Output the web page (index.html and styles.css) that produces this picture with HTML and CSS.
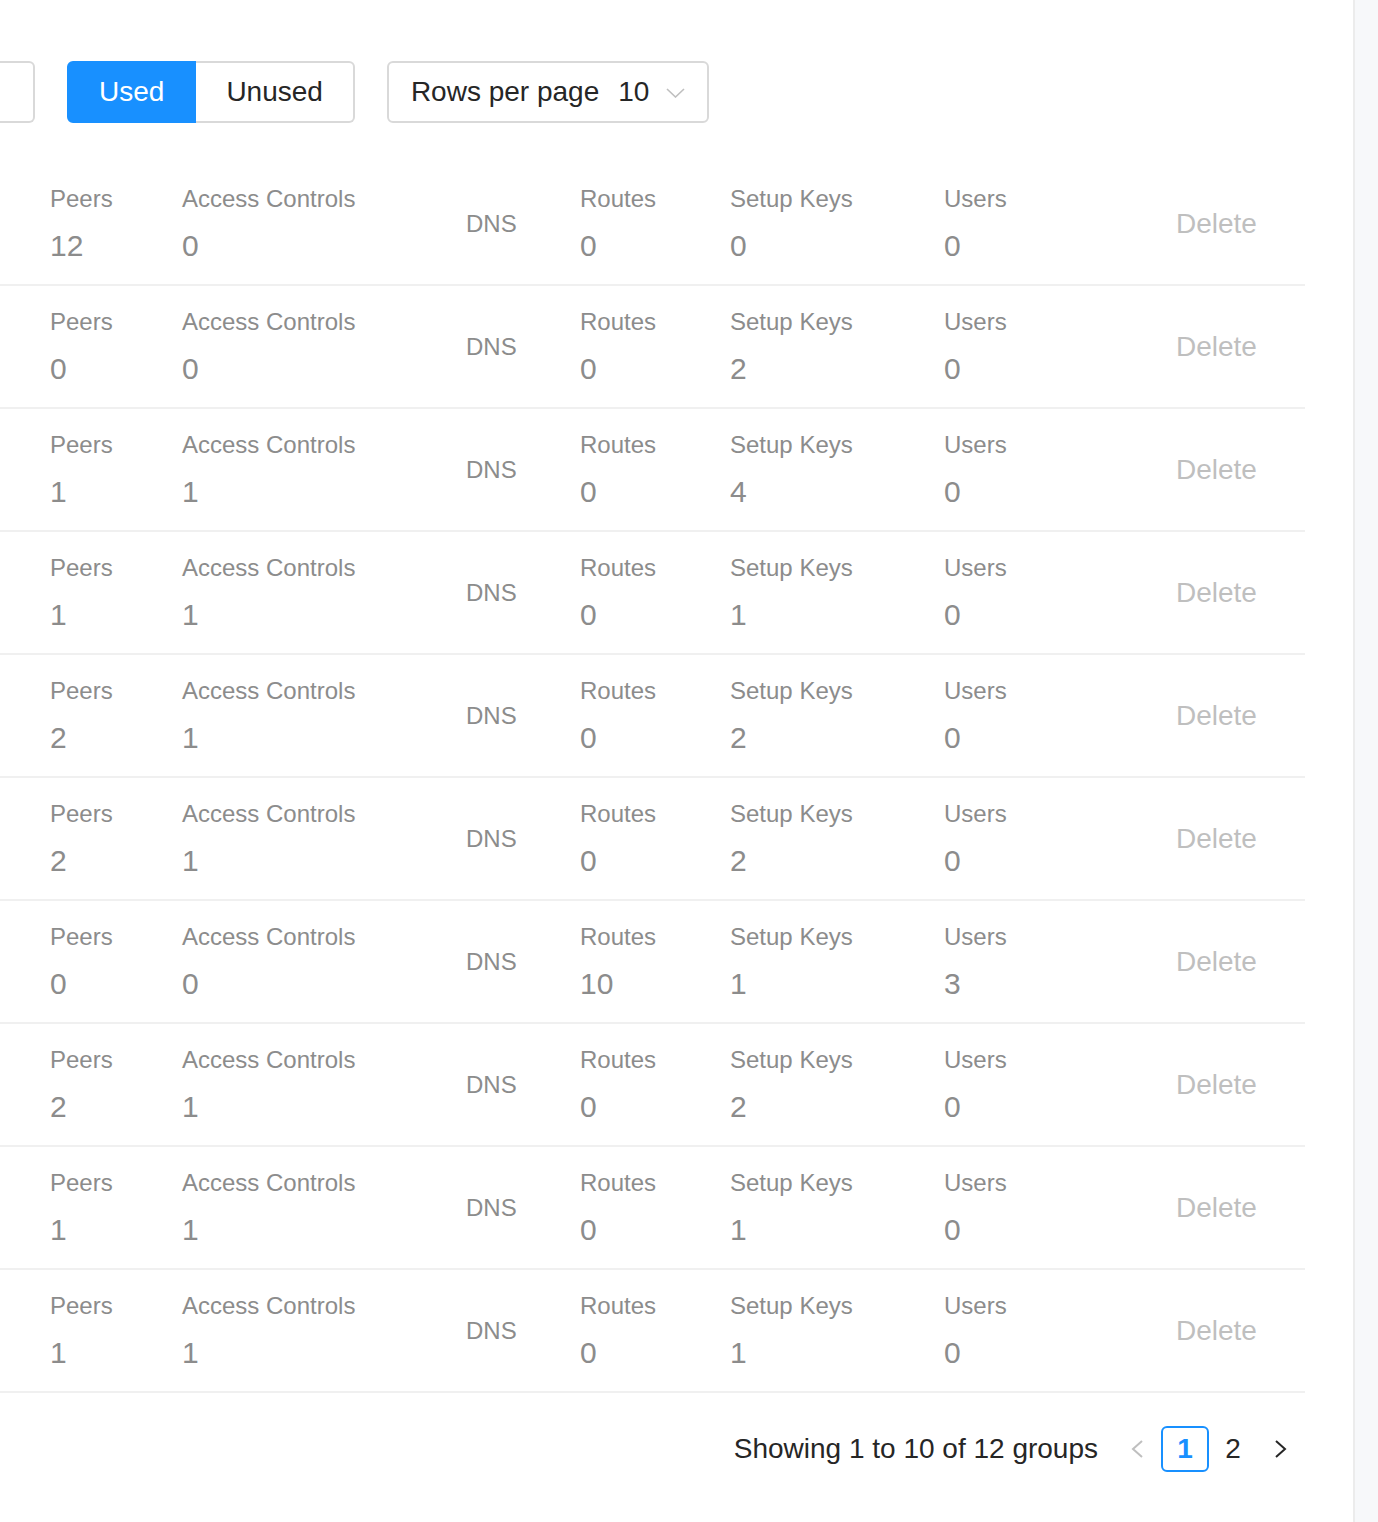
FILE: index.html
```html
<!DOCTYPE html>
<html lang="en">
<head>
<meta charset="utf-8">
<title>Groups</title>
<link rel="stylesheet" href="styles.css">
</head>
<body>
<div class="layout">
  <main class="main">
    <div class="toolbar">
      <div class="search-stub"></div>
      <div class="segmented">
        <span class="seg seg-active">Used</span>
        <span class="seg">Unused</span>
      </div>
      <div class="select">
        <span class="select-prefix">Rows per page</span>
        <span class="select-value">10</span>
        <svg class="select-arrow" width="19" height="10" viewBox="0 0 19 10"><path d="M1 1 L9.5 9 L18 1" fill="none" stroke="#bfbfbf" stroke-width="1.6"/></svg>
      </div>
    </div>

    <div class="table">
      <div class="row">
        <div class="cell"><div class="label">Peers</div><div class="value">12</div></div>
        <div class="cell"><div class="label">Access Controls</div><div class="value">0</div></div>
        <div class="cell center"><div class="label">DNS</div></div>
        <div class="cell"><div class="label">Routes</div><div class="value">0</div></div>
        <div class="cell"><div class="label">Setup Keys</div><div class="value">0</div></div>
        <div class="cell"><div class="label">Users</div><div class="value">0</div></div>
        <div class="cell center"><span class="delete">Delete</span></div>
      </div>
      <div class="row">
        <div class="cell"><div class="label">Peers</div><div class="value">0</div></div>
        <div class="cell"><div class="label">Access Controls</div><div class="value">0</div></div>
        <div class="cell center"><div class="label">DNS</div></div>
        <div class="cell"><div class="label">Routes</div><div class="value">0</div></div>
        <div class="cell"><div class="label">Setup Keys</div><div class="value">2</div></div>
        <div class="cell"><div class="label">Users</div><div class="value">0</div></div>
        <div class="cell center"><span class="delete">Delete</span></div>
      </div>
      <div class="row">
        <div class="cell"><div class="label">Peers</div><div class="value">1</div></div>
        <div class="cell"><div class="label">Access Controls</div><div class="value">1</div></div>
        <div class="cell center"><div class="label">DNS</div></div>
        <div class="cell"><div class="label">Routes</div><div class="value">0</div></div>
        <div class="cell"><div class="label">Setup Keys</div><div class="value">4</div></div>
        <div class="cell"><div class="label">Users</div><div class="value">0</div></div>
        <div class="cell center"><span class="delete">Delete</span></div>
      </div>
      <div class="row">
        <div class="cell"><div class="label">Peers</div><div class="value">1</div></div>
        <div class="cell"><div class="label">Access Controls</div><div class="value">1</div></div>
        <div class="cell center"><div class="label">DNS</div></div>
        <div class="cell"><div class="label">Routes</div><div class="value">0</div></div>
        <div class="cell"><div class="label">Setup Keys</div><div class="value">1</div></div>
        <div class="cell"><div class="label">Users</div><div class="value">0</div></div>
        <div class="cell center"><span class="delete">Delete</span></div>
      </div>
      <div class="row">
        <div class="cell"><div class="label">Peers</div><div class="value">2</div></div>
        <div class="cell"><div class="label">Access Controls</div><div class="value">1</div></div>
        <div class="cell center"><div class="label">DNS</div></div>
        <div class="cell"><div class="label">Routes</div><div class="value">0</div></div>
        <div class="cell"><div class="label">Setup Keys</div><div class="value">2</div></div>
        <div class="cell"><div class="label">Users</div><div class="value">0</div></div>
        <div class="cell center"><span class="delete">Delete</span></div>
      </div>
      <div class="row">
        <div class="cell"><div class="label">Peers</div><div class="value">2</div></div>
        <div class="cell"><div class="label">Access Controls</div><div class="value">1</div></div>
        <div class="cell center"><div class="label">DNS</div></div>
        <div class="cell"><div class="label">Routes</div><div class="value">0</div></div>
        <div class="cell"><div class="label">Setup Keys</div><div class="value">2</div></div>
        <div class="cell"><div class="label">Users</div><div class="value">0</div></div>
        <div class="cell center"><span class="delete">Delete</span></div>
      </div>
      <div class="row">
        <div class="cell"><div class="label">Peers</div><div class="value">0</div></div>
        <div class="cell"><div class="label">Access Controls</div><div class="value">0</div></div>
        <div class="cell center"><div class="label">DNS</div></div>
        <div class="cell"><div class="label">Routes</div><div class="value">10</div></div>
        <div class="cell"><div class="label">Setup Keys</div><div class="value">1</div></div>
        <div class="cell"><div class="label">Users</div><div class="value">3</div></div>
        <div class="cell center"><span class="delete">Delete</span></div>
      </div>
      <div class="row">
        <div class="cell"><div class="label">Peers</div><div class="value">2</div></div>
        <div class="cell"><div class="label">Access Controls</div><div class="value">1</div></div>
        <div class="cell center"><div class="label">DNS</div></div>
        <div class="cell"><div class="label">Routes</div><div class="value">0</div></div>
        <div class="cell"><div class="label">Setup Keys</div><div class="value">2</div></div>
        <div class="cell"><div class="label">Users</div><div class="value">0</div></div>
        <div class="cell center"><span class="delete">Delete</span></div>
      </div>
      <div class="row">
        <div class="cell"><div class="label">Peers</div><div class="value">1</div></div>
        <div class="cell"><div class="label">Access Controls</div><div class="value">1</div></div>
        <div class="cell center"><div class="label">DNS</div></div>
        <div class="cell"><div class="label">Routes</div><div class="value">0</div></div>
        <div class="cell"><div class="label">Setup Keys</div><div class="value">1</div></div>
        <div class="cell"><div class="label">Users</div><div class="value">0</div></div>
        <div class="cell center"><span class="delete">Delete</span></div>
      </div>
      <div class="row">
        <div class="cell"><div class="label">Peers</div><div class="value">1</div></div>
        <div class="cell"><div class="label">Access Controls</div><div class="value">1</div></div>
        <div class="cell center"><div class="label">DNS</div></div>
        <div class="cell"><div class="label">Routes</div><div class="value">0</div></div>
        <div class="cell"><div class="label">Setup Keys</div><div class="value">1</div></div>
        <div class="cell"><div class="label">Users</div><div class="value">0</div></div>
        <div class="cell center"><span class="delete">Delete</span></div>
      </div>
    </div>

    <div class="pagination">
      <span class="total">Showing 1 to 10 of 12 groups</span>
      <span class="page-item nav disabled">
        <svg width="14" height="20" viewBox="0 0 14 20"><path d="M12 2 L3 10 L12 18" fill="none" stroke="#bfbfbf" stroke-width="2"/></svg>
      </span>
      <span class="page-item active">1</span>
      <span class="page-item">2</span>
      <span class="page-item nav">
        <svg width="14" height="20" viewBox="0 0 14 20"><path d="M2 2 L11 10 L2 18" fill="none" stroke="#262626" stroke-width="2"/></svg>
      </span>
    </div>
  </main>
  <aside class="side"></aside>
</div>
</body>
</html>
```

FILE: styles.css
```css
html, body {
  margin: 0;
  padding: 0;
  height: 100%;
  background: #ffffff;
  font-family: "Liberation Sans", Arial, sans-serif;
  color: #262626;
}

.layout {
  display: flex;
  min-height: 100%;
}

.main {
  flex: 1;
  padding: 61px 48px 40px 0;
  min-width: 0;
}

.side {
  width: 23px;
  flex: none;
  background: #f7f8fa;
  border-left: 2px solid #ececec;
}

/* toolbar */
.toolbar {
  display: flex;
  align-items: center;
  gap: 32px;
  margin-bottom: 40px;
}

.search-stub {
  width: 33px;
  height: 58px;
  border: 2px solid #d9d9d9;
  border-left: none;
  border-radius: 0 6px 6px 0;
}

.segmented {
  display: flex;
  height: 62px;
}

.seg {
  display: flex;
  align-items: center;
  box-sizing: border-box;
  height: 62px;
  padding: 0 30px;
  font-size: 28px;
  color: #262626;
  border: 2px solid #d9d9d9;
  background: #fff;
}

.seg:first-child {
  border-radius: 6px 0 0 6px;
}

.seg:last-child {
  border-left: none;
  border-radius: 0 6px 6px 0;
}

.seg-active {
  background: #1890ff;
  border-color: #1890ff;
  color: #fff;
}

.select {
  display: flex;
  align-items: center;
  box-sizing: border-box;
  height: 62px;
  padding: 0 22px 0 22px;
  border: 2px solid #d9d9d9;
  border-radius: 6px;
  font-size: 28px;
  color: #262626;
}

.select-value {
  margin-left: 19px;
}

.select-arrow {
  margin-left: 17px;
  margin-top: 2px;
}

/* table */
.row {
  display: grid;
  grid-template-columns: 132px 284px 114px 150px 214px 232px 1fr;
  padding: 18px 0 18px 50px;
  border-bottom: 2px solid #f0f0f0;
}

.cell {
  display: flex;
  flex-direction: column;
}

.cell.center {
  justify-content: center;
}

.label {
  font-size: 24px;
  line-height: 36px;
  color: #8c8c8c;
  white-space: nowrap;
}

.value {
  font-size: 30px;
  line-height: 40px;
  margin-top: 9px;
  color: #8c8c8c;
}

.delete {
  font-size: 28px;
  line-height: 40px;
  color: #bfbfbf;
}

/* pagination */
.pagination {
  display: flex;
  justify-content: flex-end;
  align-items: center;
  margin-top: 33px;
}

.total {
  font-size: 28px;
  color: #262626;
  margin-right: 15px;
}

.page-item {
  display: flex;
  align-items: center;
  justify-content: center;
  box-sizing: border-box;
  width: 48px;
  height: 46px;
  font-size: 28px;
  color: #262626;
  border-radius: 6px;
}

.page-item.active {
  border: 2px solid #1890ff;
  color: #1890ff;
  font-weight: 700;
}
```
